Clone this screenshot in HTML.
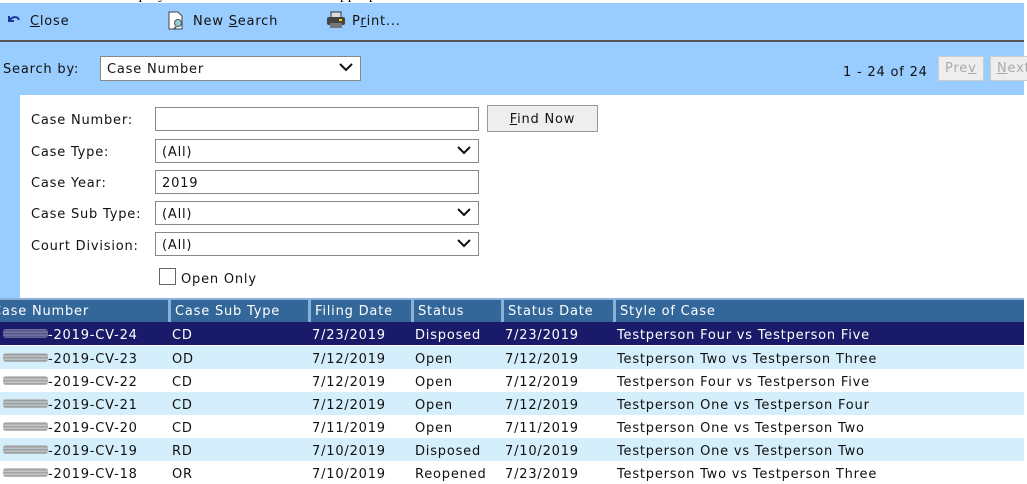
<!DOCTYPE html>
<html><head><meta charset="utf-8"><style>
*{margin:0;padding:0;box-sizing:border-box}
body{width:1027px;height:484px;overflow:hidden;background:#fff;font-family:"DejaVu Sans","Liberation Sans",sans-serif;font-size:13px;letter-spacing:0.8px;color:#111;position:relative}
.a{position:absolute;white-space:nowrap}
.tb{left:0;top:3px;width:1024px;height:37px;background:#99ccff}
.line{left:0;top:40px;width:1024px;height:2px;background:#555}
.blue{left:0;top:42px;width:1024px;height:256px;background:#99ccff}
.panel{left:20px;top:95px;width:1004px;height:203px;background:#fff}
.lbl{left:31px}
.inp{left:155px;width:324px;height:24px;border:1px solid #888;background:#fff;padding:5px 6px;font-size:13px}
.chev{position:absolute;right:6px;top:4px}
.hdr{top:298px;height:24px;background:#336699;color:#fff;width:1024px;left:0;border-top:2px solid #88b0d8}
.hc{position:absolute;top:0;height:22px;padding:4px 4px 0;border-left:3px solid #88b0d8}
.row{left:0;width:1024px;height:23px}
.c{position:absolute;top:6px}
.blur{position:absolute;left:3px;top:7px;width:45px;height:9px;background:repeating-linear-gradient(#ccc 0,#777 2px,#ccc 3px);border-radius:3px;opacity:.8}
u{text-decoration:underline}
</style></head><body>
<div class="a" style="left:120px;top:-12px;font-family:'Liberation Serif',serif;font-size:14px;color:#000">display a list of cases. Select the appropriate</div>
<div class="a tb"></div>
<div class="a line"></div>
<svg class="a" style="left:6px;top:14px" width="16" height="12" viewBox="0 0 16 12"><path d="M3 2v5h5" fill="none" stroke="#1a3a9a" stroke-width="2"/><path d="M3 7C6 2 12 2 13 6" fill="none" stroke="#1a3a9a" stroke-width="2"/></svg>
<div class="a" style="left:30px;top:14px"><u>C</u>lose</div>
<svg class="a" style="left:167px;top:11px" width="20" height="19" viewBox="0 0 20 19"><path d="M2 1h9l4 4v13H2z" fill="#fff" stroke="#444"/><circle cx="11" cy="12" r="3.5" fill="#9cc" stroke="#555"/><path d="M9 16l-2 2" stroke="#555" stroke-width="2"/></svg>
<div class="a" style="left:193px;top:14px">New <u>S</u>earch</div>
<svg class="a" style="left:326px;top:11px" width="20" height="18" viewBox="0 0 20 18"><rect x="5" y="1" width="10" height="6" fill="#ddd" stroke="#333"/><rect x="1" y="6" width="18" height="8" rx="2" fill="#444"/><rect x="4" y="12" width="12" height="5" fill="#777"/><rect x="13" y="8" width="3" height="2" fill="#fc0"/></svg>
<div class="a" style="left:352px;top:14px">P<u>r</u>int...</div>
<div class="a blue"></div>
<div class="a" style="left:3px;top:62px">Search by:</div>
<div class="a inp" style="left:100px;top:56px;width:261px;height:25px">Case Number<svg class="chev" width="16" height="12" viewBox="0 0 16 12"><path d="M2 3l6 6 6-6" fill="none" stroke="#111" stroke-width="2"/></svg></div>
<div class="a" style="left:843px;top:65px">1 - 24 of 24</div>
<div class="a" style="left:938px;top:56px;width:46px;height:25px;background:#eee;border:1px solid #ccc;color:#aaa;padding:4px 6px">Pre<u>v</u></div>
<div class="a" style="left:990px;top:56px;width:40px;height:25px;background:#eee;border:1px solid #ccc;color:#aaa;padding:4px 6px"><u>N</u>ext</div>
<div class="a panel"></div>
<div class="a lbl" style="top:113px">Case Number:</div>
<div class="a inp" style="top:107px"></div>
<div class="a" style="left:487px;top:105px;width:111px;height:27px;background:#eee;border:1px solid #999;text-align:center;padding-top:6px"><u>F</u>ind Now</div>
<div class="a lbl" style="top:145px">Case Type:</div>
<div class="a inp" style="top:139px">(All)<svg class="chev" width="16" height="12" viewBox="0 0 16 12"><path d="M2 3l6 6 6-6" fill="none" stroke="#111" stroke-width="2"/></svg></div>
<div class="a lbl" style="top:176px">Case Year:</div>
<div class="a inp" style="top:170px">2019</div>
<div class="a lbl" style="top:207px">Case Sub Type:</div>
<div class="a inp" style="top:201px">(All)<svg class="chev" width="16" height="12" viewBox="0 0 16 12"><path d="M2 3l6 6 6-6" fill="none" stroke="#111" stroke-width="2"/></svg></div>
<div class="a lbl" style="top:239px">Court Division:</div>
<div class="a inp" style="top:232px">(All)<svg class="chev" width="16" height="12" viewBox="0 0 16 12"><path d="M2 3l6 6 6-6" fill="none" stroke="#111" stroke-width="2"/></svg></div>
<div class="a" style="left:159px;top:268px;width:17px;height:17px;border:1px solid #666;background:#fff"></div>
<div class="a" style="left:181px;top:272px">Open Only</div>
<div class="a hdr">
<div class="hc" style="left:-12px;border-left:none">Case Number</div>
<div class="hc" style="left:168px">Case Sub Type</div>
<div class="hc" style="left:308px">Filing Date</div>
<div class="hc" style="left:411px">Status</div>
<div class="hc" style="left:501px">Status Date</div>
<div class="hc" style="left:613px">Style of Case</div>
</div>
<div class="a row" style="top:322px;background:#1a1a6b;color:#fff"><div class="blur" style="background:repeating-linear-gradient(#99b 0,#558 2px,#99b 3px)"></div><div class="c" style="left:48px">-2019-CV-24</div><div class="c" style="left:172px">CD</div><div class="c" style="left:312px">7/23/2019</div><div class="c" style="left:415px">Disposed</div><div class="c" style="left:505px">7/23/2019</div><div class="c" style="left:617px">Testperson Four vs Testperson Five</div></div>
<div class="a row" style="top:346px;background:#d4eefc"><div class="blur"></div><div class="c" style="left:48px">-2019-CV-23</div><div class="c" style="left:172px">OD</div><div class="c" style="left:312px">7/12/2019</div><div class="c" style="left:415px">Open</div><div class="c" style="left:505px">7/12/2019</div><div class="c" style="left:617px">Testperson Two vs Testperson Three</div></div>
<div class="a row" style="top:369px;background:#fff"><div class="blur"></div><div class="c" style="left:48px">-2019-CV-22</div><div class="c" style="left:172px">CD</div><div class="c" style="left:312px">7/12/2019</div><div class="c" style="left:415px">Open</div><div class="c" style="left:505px">7/12/2019</div><div class="c" style="left:617px">Testperson Four vs Testperson Five</div></div>
<div class="a row" style="top:392px;background:#d4eefc"><div class="blur"></div><div class="c" style="left:48px">-2019-CV-21</div><div class="c" style="left:172px">CD</div><div class="c" style="left:312px">7/12/2019</div><div class="c" style="left:415px">Open</div><div class="c" style="left:505px">7/12/2019</div><div class="c" style="left:617px">Testperson One vs Testperson Four</div></div>
<div class="a row" style="top:415px;background:#fff"><div class="blur"></div><div class="c" style="left:48px">-2019-CV-20</div><div class="c" style="left:172px">CD</div><div class="c" style="left:312px">7/11/2019</div><div class="c" style="left:415px">Open</div><div class="c" style="left:505px">7/11/2019</div><div class="c" style="left:617px">Testperson One vs Testperson Two</div></div>
<div class="a row" style="top:438px;background:#d4eefc"><div class="blur"></div><div class="c" style="left:48px">-2019-CV-19</div><div class="c" style="left:172px">RD</div><div class="c" style="left:312px">7/10/2019</div><div class="c" style="left:415px">Disposed</div><div class="c" style="left:505px">7/10/2019</div><div class="c" style="left:617px">Testperson One vs Testperson Two</div></div>
<div class="a row" style="top:461px;background:#fff"><div class="blur"></div><div class="c" style="left:48px">-2019-CV-18</div><div class="c" style="left:172px">OR</div><div class="c" style="left:312px">7/10/2019</div><div class="c" style="left:415px">Reopened</div><div class="c" style="left:505px">7/23/2019</div><div class="c" style="left:617px">Testperson Two vs Testperson Three</div></div>
</body></html>
